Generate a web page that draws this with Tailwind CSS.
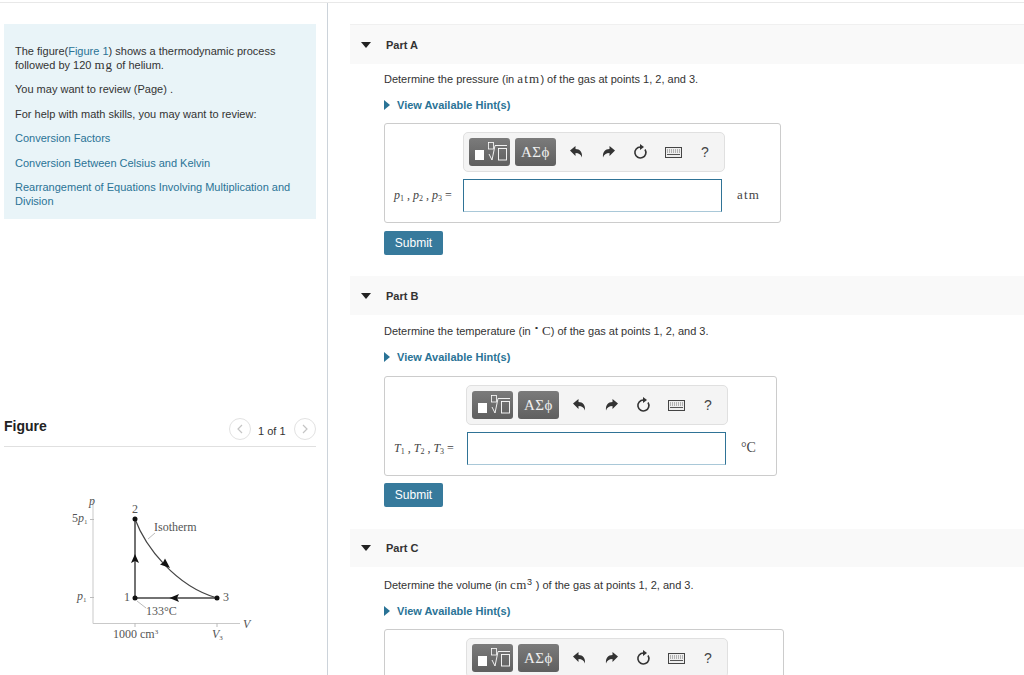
<!DOCTYPE html>
<html>
<head>
<meta charset="utf-8">
<script src="https://cdn.jsdelivr.net/npm/@tailwindcss/browser@4"></script>
</head>
<body class="bg-white overflow-hidden font-['Liberation_Sans',Arial,sans-serif] text-[#333] text-[11px]">
<div class="w-[1024px] h-[675px] overflow-hidden pt-[2px]">
<div class="h-[1px] bg-[#e8e8e8]"></div>
<div class="flex h-[672px]">

<!-- Left column -->
<aside class="w-[328px] shrink-0 border-r border-[#ccd3da] pl-[4px] pr-[11px] pt-[21px]">
  <section class="bg-[#e9f4f8] h-[195px] pl-[11px] pr-[10px] pt-[20px] text-[11px] leading-[14px]">
    <p>The figure(<span class="text-[#2a7396]">Figure 1</span>) shows a thermodynamic process followed by 120 <span class="font-['Liberation_Serif',serif] text-[13px] tracking-[1px]">mg</span> of helium.</p>
    <p class="mt-[10px]">You may want to review (Page) .</p>
    <p class="mt-[11px]">For help with math skills, you may want to review:</p>
    <p class="mt-[10px] text-[#2a7396]">Conversion Factors</p>
    <p class="mt-[11px] text-[#2a7396]">Conversion Between Celsius and Kelvin</p>
    <p class="mt-[10px] text-[#2a7396]">Rearrangement of Equations Involving Multiplication and Division</p>
  </section>
  <div class="mt-[197px] h-[31px] border-b border-[#e0e0e0] flex items-start justify-between">
    <h2 class="font-bold text-[14px] leading-[16px] text-[#222] mt-[2px]">Figure</h2>
    <div class="flex items-start mt-[2px]">
      <span class="w-[22px] h-[22px] rounded-full border border-[#e2e2e2] flex items-center justify-center">
        <svg width="8" height="12" viewBox="0 0 8 12" fill="none" stroke="#c4c4c4" stroke-width="1.2"><path d="M6 2 L2 6 L6 10"/></svg>
      </span>
      <span class="ml-[7px] mr-[9px] mt-[6px] leading-[14px] text-[11px] text-[#333] w-[27px] text-center whitespace-nowrap">1 of 1</span>
      <span class="w-[22px] h-[22px] rounded-full border border-[#e2e2e2] flex items-center justify-center">
        <svg width="8" height="12" viewBox="0 0 8 12" fill="none" stroke="#c4c4c4" stroke-width="1.2"><path d="M2 2 L6 6 L2 10"/></svg>
      </span>
    </div>
  </div>
  <svg class="mt-[41px] -ml-[4px] block" width="316" height="170" viewBox="0 487 316 170" font-family="'Liberation Serif',serif" font-size="12" fill="#555">
    <path d="M93 500 V622.500 H240" fill="none" stroke="#c9c9c9" stroke-width="1"/>
    <path d="M90 518.500 H94 M90 596.500 H94 M135 622 V626 M217 622 V626" stroke="#bbb" stroke-width="1"/>
    <path d="M135 518 V597 H217" fill="none" stroke="#444" stroke-width="1.500"/>
    <path d="M135 518 C145 545 175 585 217 597" fill="none" stroke="#444" stroke-width="1.200"/>
    <path d="M148 538 L155 532" stroke="#bbb" fill="none"/>
    <path d="M137 600 L146 607" stroke="#bbb" fill="none"/>
    <circle cx="135" cy="518" r="2.500" fill="#111"/><circle cx="135" cy="597" r="2.500" fill="#111"/><circle cx="217" cy="597" r="2.500" fill="#111"/>
    <path d="M135 553 L131 562 L135 560 L139 562 Z" fill="#111"/>
    <path d="M170 567 L160 563.500 L163 561.500 L165 557.500 Z" fill="#111"/>
    <path d="M169.500 597 L179 593 L177 597 L179 601 Z" fill="#111"/>
    <text x="89" y="504" font-style="italic">p</text>
    <text x="72" y="521">5<tspan font-style="italic">p</tspan><tspan font-size="7" dy="2">1</tspan></text>
    <text x="77" y="599" font-style="italic">p<tspan font-size="7" dy="2" font-style="normal">1</tspan></text>
    <text x="132" y="512">2</text>
    <text x="124" y="600">1</text>
    <text x="223" y="600">3</text>
    <text x="154" y="530">Isotherm</text>
    <text x="146" y="614">133°C</text>
    <text x="113" y="637">1000 cm<tspan font-size="7" dy="-4">3</tspan></text>
    <text x="212" y="637" font-style="italic">V<tspan font-size="7" dy="2" font-style="normal">3</tspan></text>
    <text x="243" y="627" font-style="italic">V</text>
  </svg>
</aside>

<!-- Right column -->
<main class="flex-1 pl-[22px]">

  <!-- Part A -->
  <section class="h-[252px] pt-[21px]">
    <header class="h-[40px] bg-[#f9f9f9] border-t border-[#f0f0f0] flex items-center pl-[11px]">
      <svg width="10" height="6" viewBox="0 0 10 6" fill="#222"><path d="M0 0 H10 L5 6 Z"/></svg>
      <span class="ml-[15px] mt-[2px] font-bold text-[11px] text-[#333]">Part A</span>
    </header>
    <div class="pl-[34px]">
      <p class="mt-[8px] h-[14px] leading-[14px] whitespace-nowrap">Determine the pressure (in <span class="font-['Liberation_Serif',serif] text-[13px] tracking-[1.2px]">atm</span>) of the gas at points 1, 2, and 3.</p>
      <p class="mt-[12px] h-[14px] flex items-center font-bold text-[#2a7396] leading-[14px]"><svg width="6" height="10" viewBox="0 0 6 10" fill="#2a7396"><path d="M0 0 L6 5 L0 10 Z"/></svg><span class="ml-[7px]">View Available Hint(s)</span></p>
      <div class="mt-[11px] w-[397px] h-[100px] border border-[#ccc] rounded-[3px] pt-[8px] relative">
        <div class="ml-[78px] w-[262px] h-[40px] bg-[#f4f4f4] border border-[#e0e0e0] rounded-[5px] flex items-center pl-[5px]">
          <div class="w-[41px] h-[28px] rounded-[3px] bg-gradient-to-b from-[#7b7b7b] to-[#5f5f5f]">
            <svg width="41" height="28" viewBox="0 0 41 28" fill="none" stroke="#fff"><rect x="6" y="12" width="9" height="10" fill="#fff" stroke="none"/><rect x="19.500" y="4.500" width="5" height="6.500" stroke-width="0.8"/><path d="M20 16 L23 22 L26 7.500 H38" stroke-width="0.9"/><rect x="29.500" y="10.500" width="8" height="11.500" stroke-width="0.9"/></svg>
          </div>
          <div class="ml-[5px] w-[41px] h-[28px] rounded-[3px] bg-gradient-to-b from-[#7b7b7b] to-[#5f5f5f] flex items-center justify-center text-white/90 text-[15px] tracking-[0.5px] font-['Liberation_Serif',serif]">ΑΣϕ</div>
          <svg class="ml-[14px]" width="13" height="12" viewBox="0 0 13 12" fill="#333"><path d="M0 4.500 L5.500 0 V3 C10 3 12.500 6 12 11.500 C11 8.500 9 7 5.500 7 V10 Z"/></svg>
          <svg class="ml-[19px]" width="13" height="12" viewBox="0 0 13 12" fill="#333"><path d="M13 4.500 L7.500 0 V3 C3 3 0.500 6 1 11.500 C2 8.500 4 7 7.500 7 V10 Z"/></svg>
          <svg class="ml-[18px]" width="15" height="16" viewBox="0 0 15 16" fill="none" stroke="#333" stroke-width="1.600"><path d="M7.500 3 A5.500 5.500 0 1 0 12 5.500"/><path d="M7 0 L11 3 L7 6 Z" fill="#333" stroke="none"/></svg>
          <svg class="ml-[17px]" width="17" height="11" viewBox="0 0 17 11" fill="none"><rect x="0.500" y="0.500" width="16" height="10" fill="#eee" stroke="#444"/><path d="M2 3 H15 M2 5 H15" stroke="#777" stroke-dasharray="1 1"/><path d="M2 7.500 H15" stroke="#555"/></svg>
          <span class="ml-[19px] text-[#444] text-[14px]">?</span>
        </div>
        <div class="flex items-center h-[33px] mt-[7px]">
          <span class="ml-[9px] mb-[2px] w-[69px] whitespace-nowrap font-['Liberation_Serif',serif] text-[12px] text-[#444]"><i>p</i><sub class="text-[8px]">1</sub> , <i>p</i><sub class="text-[8px]">2</sub> , <i>p</i><sub class="text-[8px]">3</sub> =</span>
          <div class="w-[259px] h-[33px] border border-[#2f7396] border-b-[#a9c8d8]"></div>
          <span class="ml-[15px] mb-[2px] font-['Liberation_Serif',serif] text-[13px] tracking-[1.2px] text-[#444]">atm</span>
        </div>
      </div>
      <button class="mt-[8px] w-[59px] h-[24px] bg-[#377a9c] rounded-[2px] text-white text-[12px] block">Submit</button>
    </div>
  </section>

  <!-- Part B -->
  <section class="h-[252px] pt-[21px]">
    <header class="h-[39px] bg-[#f9f9f9] flex items-center pl-[11px]">
      <svg width="10" height="6" viewBox="0 0 10 6" fill="#222"><path d="M0 0 H10 L5 6 Z"/></svg>
      <span class="ml-[15px] mt-[2px] font-bold text-[11px] text-[#333]">Part B</span>
    </header>
    <div class="pl-[34px]">
      <p class="mt-[9px] h-[14px] leading-[14px] whitespace-nowrap">Determine the temperature (in <span class="font-['Liberation_Serif',serif] text-[13px]"><sup class="text-[8px]">∘</sup> C</span>) of the gas at points 1, 2, and 3.</p>
      <p class="mt-[12px] h-[14px] flex items-center font-bold text-[#2a7396] leading-[14px]"><svg width="6" height="10" viewBox="0 0 6 10" fill="#2a7396"><path d="M0 0 L6 5 L0 10 Z"/></svg><span class="ml-[7px]">View Available Hint(s)</span></p>
      <div class="mt-[12px] w-[393px] h-[100px] border border-[#ccc] rounded-[3px] pt-[8px]">
        <div class="ml-[81px] w-[262px] h-[40px] bg-[#f4f4f4] border border-[#e0e0e0] rounded-[5px] flex items-center pl-[5px]">
          <div class="w-[41px] h-[28px] rounded-[3px] bg-gradient-to-b from-[#7b7b7b] to-[#5f5f5f]">
            <svg width="41" height="28" viewBox="0 0 41 28" fill="none" stroke="#fff"><rect x="6" y="12" width="9" height="10" fill="#fff" stroke="none"/><rect x="19.500" y="4.500" width="5" height="6.500" stroke-width="0.8"/><path d="M20 16 L23 22 L26 7.500 H38" stroke-width="0.9"/><rect x="29.500" y="10.500" width="8" height="11.500" stroke-width="0.9"/></svg>
          </div>
          <div class="ml-[5px] w-[41px] h-[28px] rounded-[3px] bg-gradient-to-b from-[#7b7b7b] to-[#5f5f5f] flex items-center justify-center text-white/90 text-[15px] tracking-[0.5px] font-['Liberation_Serif',serif]">ΑΣϕ</div>
          <svg class="ml-[14px]" width="13" height="12" viewBox="0 0 13 12" fill="#333"><path d="M0 4.500 L5.500 0 V3 C10 3 12.500 6 12 11.500 C11 8.500 9 7 5.500 7 V10 Z"/></svg>
          <svg class="ml-[19px]" width="13" height="12" viewBox="0 0 13 12" fill="#333"><path d="M13 4.500 L7.500 0 V3 C3 3 0.500 6 1 11.500 C2 8.500 4 7 7.500 7 V10 Z"/></svg>
          <svg class="ml-[18px]" width="15" height="16" viewBox="0 0 15 16" fill="none" stroke="#333" stroke-width="1.600"><path d="M7.500 3 A5.500 5.500 0 1 0 12 5.500"/><path d="M7 0 L11 3 L7 6 Z" fill="#333" stroke="none"/></svg>
          <svg class="ml-[17px]" width="17" height="11" viewBox="0 0 17 11" fill="none"><rect x="0.500" y="0.500" width="16" height="10" fill="#eee" stroke="#444"/><path d="M2 3 H15 M2 5 H15" stroke="#777" stroke-dasharray="1 1"/><path d="M2 7.500 H15" stroke="#555"/></svg>
          <span class="ml-[19px] text-[#444] text-[14px]">?</span>
        </div>
        <div class="flex items-center h-[33px] mt-[7px]">
          <span class="ml-[9px] mb-[2px] w-[73px] whitespace-nowrap font-['Liberation_Serif',serif] text-[12px] text-[#444]"><i>T</i><sub class="text-[8px]">1</sub> , <i>T</i><sub class="text-[8px]">2</sub> , <i>T</i><sub class="text-[8px]">3</sub> =</span>
          <div class="w-[259px] h-[33px] border border-[#2f7396] border-b-[#a9c8d8]"></div>
          <span class="ml-[15px] mb-[2px] font-['Liberation_Serif',serif] text-[14px] text-[#444]">°C</span>
        </div>
      </div>
      <button class="mt-[7px] w-[59px] h-[24px] bg-[#377a9c] rounded-[2px] text-white text-[12px] block">Submit</button>
    </div>
  </section>

  <!-- Part C -->
  <section class="pt-[22px]">
    <header class="h-[38px] bg-[#f9f9f9] flex items-center pl-[11px]">
      <svg width="10" height="6" viewBox="0 0 10 6" fill="#222"><path d="M0 0 H10 L5 6 Z"/></svg>
      <span class="ml-[15px] font-bold text-[11px] text-[#333]">Part C</span>
    </header>
    <div class="pl-[34px]">
      <p class="mt-[11px] h-[14px] leading-[14px] whitespace-nowrap">Determine the volume (in <span class="font-['Liberation_Serif',serif] text-[13px] tracking-[0.6px]">cm<sup class="text-[9px] font-['Liberation_Sans',sans-serif]">3</sup></span> ) of the gas at points 1, 2, and 3.</p>
      <p class="mt-[12px] h-[14px] flex items-center font-bold text-[#2a7396] leading-[14px]"><svg width="6" height="10" viewBox="0 0 6 10" fill="#2a7396"><path d="M0 0 L6 5 L0 10 Z"/></svg><span class="ml-[7px]">View Available Hint(s)</span></p>
      <div class="mt-[11px] w-[400px] h-[100px] border border-[#ccc] rounded-[3px] pt-[8px]">
        <div class="ml-[81px] w-[262px] h-[40px] bg-[#f4f4f4] border border-[#e0e0e0] rounded-[5px] flex items-center pl-[5px]">
          <div class="w-[41px] h-[28px] rounded-[3px] bg-gradient-to-b from-[#7b7b7b] to-[#5f5f5f]">
            <svg width="41" height="28" viewBox="0 0 41 28" fill="none" stroke="#fff"><rect x="6" y="12" width="9" height="10" fill="#fff" stroke="none"/><rect x="19.500" y="4.500" width="5" height="6.500" stroke-width="0.8"/><path d="M20 16 L23 22 L26 7.500 H38" stroke-width="0.9"/><rect x="29.500" y="10.500" width="8" height="11.500" stroke-width="0.9"/></svg>
          </div>
          <div class="ml-[5px] w-[41px] h-[28px] rounded-[3px] bg-gradient-to-b from-[#7b7b7b] to-[#5f5f5f] flex items-center justify-center text-white/90 text-[15px] tracking-[0.5px] font-['Liberation_Serif',serif]">ΑΣϕ</div>
          <svg class="ml-[14px]" width="13" height="12" viewBox="0 0 13 12" fill="#333"><path d="M0 4.500 L5.500 0 V3 C10 3 12.500 6 12 11.500 C11 8.500 9 7 5.500 7 V10 Z"/></svg>
          <svg class="ml-[19px]" width="13" height="12" viewBox="0 0 13 12" fill="#333"><path d="M13 4.500 L7.500 0 V3 C3 3 0.500 6 1 11.500 C2 8.500 4 7 7.500 7 V10 Z"/></svg>
          <svg class="ml-[18px]" width="15" height="16" viewBox="0 0 15 16" fill="none" stroke="#333" stroke-width="1.600"><path d="M7.500 3 A5.500 5.500 0 1 0 12 5.500"/><path d="M7 0 L11 3 L7 6 Z" fill="#333" stroke="none"/></svg>
          <svg class="ml-[17px]" width="17" height="11" viewBox="0 0 17 11" fill="none"><rect x="0.500" y="0.500" width="16" height="10" fill="#eee" stroke="#444"/><path d="M2 3 H15 M2 5 H15" stroke="#777" stroke-dasharray="1 1"/><path d="M2 7.500 H15" stroke="#555"/></svg>
          <span class="ml-[19px] text-[#444] text-[14px]">?</span>
        </div>
      </div>
    </div>
  </section>
</main>
</div>
</div>
</body>
</html>
